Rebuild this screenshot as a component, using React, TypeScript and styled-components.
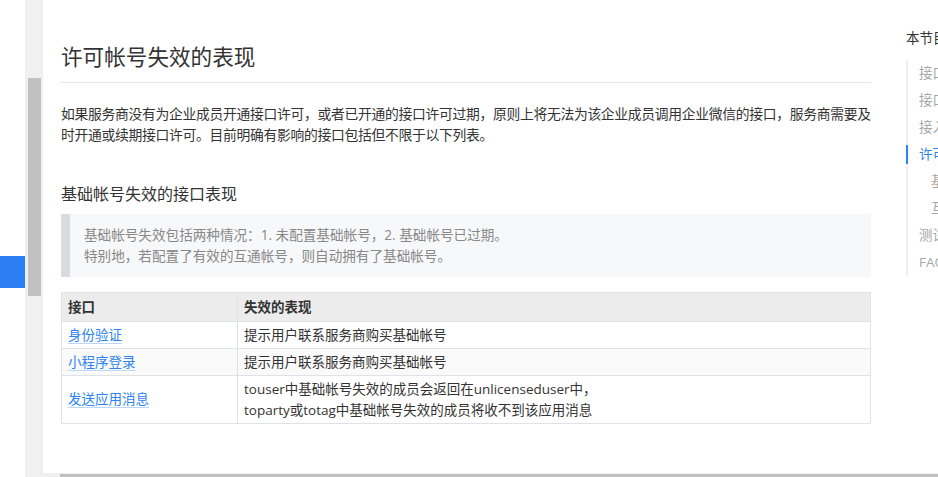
import React from "react";
import styled, { createGlobalStyle } from "styled-components";

const GlobalStyle = createGlobalStyle`
  html, body {
    margin: 0;
    padding: 0;
    overflow: hidden;
    background: #fff;
  }
  body {
    font-family: "Open Sans", "Noto Sans CJK SC", sans-serif;
    color: #333;
  }
  * {
    box-sizing: border-box;
  }
`;

const Page = styled.div`
  display: flex;
  width: 938px;
  height: 477px;
  overflow: hidden;
`;

const LeftNav = styled.nav`
  width: 25px;
  flex-shrink: 0;
  padding-top: 256px;
  background: #fff;
`;

const NavActive = styled.div`
  height: 32px;
  background: #2a7ef2;
`;

const Gutter = styled.div`
  width: 18px;
  flex-shrink: 0;
  background: #f0f0f0;
  padding: 78px 2px 0 3px;
`;

const Thumb = styled.div`
  width: 13px;
  height: 218px;
  background: #c1c1c1;
`;

const Main = styled.div`
  flex: 1;
  min-width: 0;
  display: flex;
  flex-direction: column;
`;

const Viewport = styled.div`
  flex: 1;
  display: flex;
  gap: 35px;
  overflow: hidden;
`;

const HScroll = styled.div`
  height: 4px;
  flex-shrink: 0;
  background: #f0f0f0;
  padding: 1px 0 0 17px;

  div {
    height: 3px;
    background: #c1c1c1;
  }
`;

const Article = styled.article`
  width: 828px;
  flex-shrink: 0;
  padding: 40px 0 0 18px;
`;

const Title = styled.h1`
  margin: 0;
  font-size: 21.6px;
  font-weight: normal;
  line-height: 34px;
  padding-bottom: 8px;
  border-bottom: 1px solid #e6e6e6;
  color: #333;
`;

const Para = styled.p`
  margin: 20px 0 0;
  font-size: 13.8px;
  letter-spacing: -0.3px;
  line-height: 21px;
  color: #333;
`;

const SubTitle = styled.h2`
  margin: 37px 0 0;
  font-size: 16px;
  font-weight: normal;
  line-height: 24px;
  color: #333;
`;

const Quote = styled.blockquote`
  margin: 8px 0 0;
  padding: 10px 14px 11px;
  border-left: 9px solid #d8dce1;
  background: #f7f8fa;
  color: #888;
  font-size: 13.6px;
  line-height: 21px;
`;

const Table = styled.table`
  margin-top: 15px;
  width: 810px;
  border-collapse: collapse;
  table-layout: fixed;
  font-size: 13.5px;
  color: #333;

  th,
  td {
    border: 1px solid #dfe3e9;
    text-align: left;
    vertical-align: middle;
    padding: 2.5px 6px;
    line-height: 21px;
  }

  th {
    background: #ececec;
    font-weight: bold;
    padding: 4px 6px 3px;
  }

  tbody tr:nth-child(even) td {
    background: #fafafa;
  }
`;

const ApiLink = styled.a`
  color: #2c84f0;
  text-decoration: underline;
  text-decoration-color: #bcd6f8;
  text-underline-offset: 3px;
`;

const Toc = styled.aside`
  flex-shrink: 0;
  width: 160px;
  padding-top: 28px;
`;

const TocTitle = styled.div`
  font-size: 13.5px;
  line-height: 20px;
  color: #333;
  margin-bottom: 12px;
  white-space: nowrap;
`;

const TocList = styled.ul`
  list-style: none;
  margin: 0;
  padding: 0;
  border-left: 2px solid #eeeeee;
`;

const TocItem = styled.li<{ $active?: boolean; $sub?: boolean }>`
  position: relative;
  font-size: 13.5px;
  line-height: 27px;
  white-space: nowrap;
  padding-left: ${p => (p.$sub ? "23px" : "11px")};
  color: ${p => (p.$active ? "#2c84f0" : "#a6a6a6")};

  &::before {
    content: "";
    display: ${p => (p.$active ? "block" : "none")};
    position: absolute;
    left: -2px;
    top: 4px;
    width: 2px;
    height: 19px;
    background: #2c84f0;
  }
`;

const rows = [
  { name: "身份验证", desc: ["提示用户联系服务商购买基础帐号"] },
  { name: "小程序登录", desc: ["提示用户联系服务商购买基础帐号"] },
  {
    name: "发送应用消息",
    desc: [
      "touser中基础帐号失效的成员会返回在unlicenseduser中，",
      "toparty或totag中基础帐号失效的成员将收不到该应用消息",
    ],
  },
];

const toc = [
  { text: "接口调用许可概述" },
  { text: "接口许可的购买" },
  { text: "接入流程" },
  { text: "许可帐号失效的表现", active: true },
  { text: "基础帐号失效的接口表现", sub: true },
  { text: "互通帐号失效的接口表现", sub: true },
  { text: "测试企业" },
  { text: "FAQ" },
];

export default function App() {
  return (
    <>
      <GlobalStyle />
      <Page>
        <LeftNav>
          <NavActive />
        </LeftNav>
        <Gutter>
          <Thumb />
        </Gutter>
        <Main>
          <Viewport>
            <Article>
              <Title>许可帐号失效的表现</Title>
              <Para>
                如果服务商没有为企业成员开通接口许可，或者已开通的接口许可过期，原则上将无法为该企业成员调用企业微信的接口，服务商需要及时开通或续期接口许可。目前明确有影响的接口包括但不限于以下列表。
              </Para>
              <SubTitle>基础帐号失效的接口表现</SubTitle>
              <Quote>
                基础帐号失效包括两种情况：1. 未配置基础帐号，2. 基础帐号已过期。
                <br />
                特别地，若配置了有效的互通帐号，则自动拥有了基础帐号。
              </Quote>
              <Table>
                <colgroup>
                  <col style={{ width: 176 }} />
                  <col />
                </colgroup>
                <thead>
                  <tr>
                    <th>接口</th>
                    <th>失效的表现</th>
                  </tr>
                </thead>
                <tbody>
                  {rows.map(row => (
                    <tr key={row.name}>
                      <td>
                        <ApiLink href="#">{row.name}</ApiLink>
                      </td>
                      <td>
                        {row.desc.map((line, i) => (
                          <React.Fragment key={i}>
                            {i > 0 && <br />}
                            {line}
                          </React.Fragment>
                        ))}
                      </td>
                    </tr>
                  ))}
                </tbody>
              </Table>
            </Article>
            <Toc>
              <TocTitle>本节目录</TocTitle>
              <TocList>
                {toc.map(item => (
                  <TocItem key={item.text} $active={item.active} $sub={item.sub}>
                    {item.text}
                  </TocItem>
                ))}
              </TocList>
            </Toc>
          </Viewport>
          <HScroll>
            <div />
          </HScroll>
        </Main>
      </Page>
    </>
  );
}
